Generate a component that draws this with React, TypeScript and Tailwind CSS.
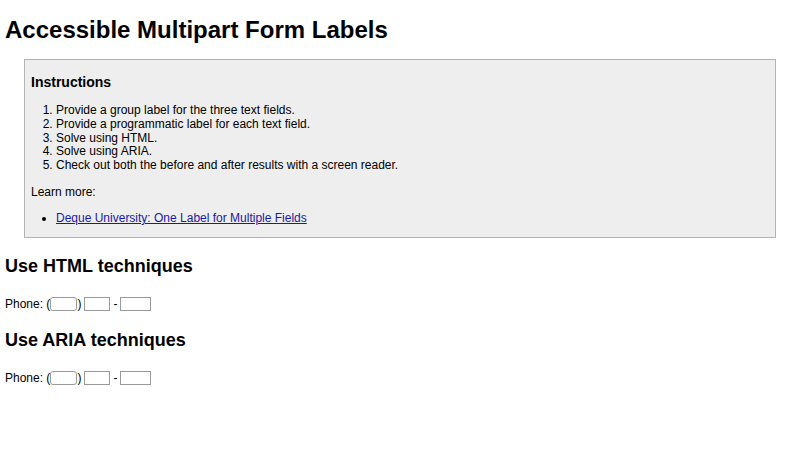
export default function App() {
  const PhoneRow = () => (
    <p className="mb-[16px] flex h-[20px] items-center">
      <span>Phone: (</span>
      <input
        type="text"
        aria-label="area code"
        className="h-[14px] w-[27px] rounded-[3px] border border-[#9a9a9a] bg-white"
      />
      <span>)</span>
      <input type="text" aria-label="prefix" className="ml-[3px] h-[14px] w-[26px] border border-[#9a9a9a] bg-white" />
      <span className="mx-[3px]">-</span>
      <input type="text" aria-label="line number" className="h-[14px] w-[31px] border border-[#9a9a9a] bg-white" />
    </p>
  );

  return (
    <div className="min-h-[450px] bg-white px-[5px] pt-[16px] font-['Liberation_Sans',Arial,sans-serif] text-[12px] text-black">
      <h1 className="mb-[15px] text-[24px] font-bold leading-[28px]">Accessible Multipart Form Labels</h1>

      <div className="mx-[19px] mb-[18px] border border-[#b4b4b4] bg-[#eeeeee] px-[6px]">
        <h3 className="mt-[14px] mb-[14px] text-[14px] font-bold leading-[16px]">Instructions</h3>
        <ol className="mb-[12px] list-decimal pl-[25px] leading-[13.8px]">
          <li>Provide a group label for the three text fields.</li>
          <li>Provide a programmatic label for each text field.</li>
          <li>Solve using HTML.</li>
          <li>Solve using ARIA.</li>
          <li>Check out both the before and after results with a screen reader.</li>
        </ol>
        <p className="mb-[12px] leading-[14px]">Learn more:</p>
        <ul className="mb-[12px] list-disc pl-[25px] leading-[14px]">
          <li>
            <a href="#" className="text-[#1a1aa6] underline">
              Deque University: One Label for Multiple Fields
            </a>
          </li>
        </ul>
      </div>

      <h2 className="mb-[17px] text-[18px] font-bold leading-[21px]">Use HTML techniques</h2>
      <PhoneRow />

      <h2 className="mb-[17px] text-[18px] font-bold leading-[21px]">Use ARIA techniques</h2>
      <PhoneRow />
    </div>
  );
}
